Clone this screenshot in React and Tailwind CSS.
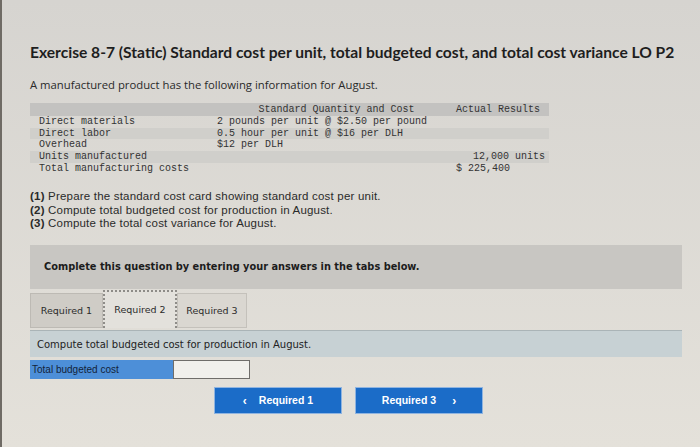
export default function App() {
  const rows = [
    { label: "Direct materials", std: "2 pounds per unit @ $2.50 per pound", actual: "", shade: false },
    { label: "Direct labor", std: "0.5 hour per unit @ $16 per DLH", actual: "", shade: true },
    { label: "Overhead", std: "$12 per DLH", actual: "", shade: false },
    { label: "Units manufactured", std: "", actual: "12,000 units", shade: true, right: true },
    { label: "Total manufacturing costs", std: "", actual: "$ 225,400", shade: false },
  ];

  return (
    <div className="w-[700px] h-[447px] overflow-hidden bg-gradient-to-b from-[#d6d4d0] to-[#e4e1da] border-l-[2px] border-[#6f6b65] text-[#222]">
      <div className="pl-[28px] pr-[18px]">
        <h1 className="pt-[42px] text-[15.6px] font-bold leading-[20px] text-[#1e1e1e]" style={{ fontFamily: "Lato, 'Open Sans', sans-serif" }}>
          Exercise 8-7 (Static) Standard cost per unit, total budgeted cost, and total cost variance LO P2
        </h1>

        <p className="mt-[16px] text-[11.3px] leading-[14px] text-[#2a2a2a]" style={{ fontFamily: "'Open Sans', sans-serif" }}>
          A manufactured product has the following information for August.
        </p>

        {/* data table */}
        <div className="mt-[11px] w-[519px] text-[10px] leading-[11.5px] text-[#333]" style={{ fontFamily: "'Liberation Mono', monospace" }}>
          <div className="flex h-[13px] items-center bg-[#c3c2c0]">
            <div className="w-[187px]"></div>
            <div className="w-[239px] text-center">Standard Quantity and Cost</div>
            <div className="flex-1">Actual Results</div>
          </div>
          {rows.map((r) => (
            <div key={r.label} className={`flex h-[11.7px] items-center ${r.shade ? "bg-[#d0cfcb]" : ""}`}>
              <div className="w-[187px] pl-[9px] whitespace-pre">{r.label}</div>
              <div className="w-[239px] whitespace-pre">{r.std}</div>
              <div className={`flex-1 whitespace-pre ${r.right ? "text-right pr-[4px]" : ""}`}>{r.actual}</div>
            </div>
          ))}
        </div>

        <div className="mt-[16px] text-[11.5px] leading-[13.25px] tracking-[0.2px] text-[#2a2a2a]" style={{ fontFamily: "'Liberation Sans', Arial, sans-serif" }}>
          <p><span className="font-bold">(1)</span> Prepare the standard cost card showing standard cost per unit.</p>
          <p><span className="font-bold">(2)</span> Compute total budgeted cost for production in August.</p>
          <p><span className="font-bold">(3)</span> Compute the total cost variance for August.</p>
        </div>

        <div className="mt-[15px] h-[44px] flex items-center bg-[#c8c6c2] pl-[14px] text-[9.8px] font-bold text-[#1c1c1c]" style={{ fontFamily: "'DejaVu Sans', Verdana, sans-serif" }}>
          Complete this question by entering your answers in the tabs below.
        </div>

        {/* tabs */}
        <div className="flex items-end h-[39px] text-[9.5px] text-[#2b2b2b]" style={{ fontFamily: "'DejaVu Sans', Verdana, sans-serif" }}>
          <div className="w-[73px] h-[35px] flex items-center justify-center bg-[#cfccc6] border border-[#bdbab4]">Required 1</div>
          <div className="w-[74px] h-[38px] flex items-center justify-center bg-[#e3e1dc] border-x-2 border-t-2 border-dotted border-[#8e8c88]">Required 2</div>
          <div className="w-[70px] h-[35px] flex items-center justify-center bg-[#dad7d1] border border-[#c4c1bb]">Required 3</div>
        </div>

        <div className="mt-[2px] h-[27px] flex items-center bg-[#c7d1d4] border-t border-[#aab4b7] pl-[7px] text-[10px] text-[#222]" style={{ fontFamily: "'DejaVu Sans', Verdana, sans-serif" }}>
          Compute total budgeted cost for production in August.
        </div>

        <div className="mt-[3px] flex h-[19px]">
          <div className="w-[143px] flex items-center bg-[#4d8fd8] pl-[2px] text-[10px] text-[#13233a]" style={{ fontFamily: "'Liberation Sans', Arial, sans-serif" }}>
            Total budgeted cost
          </div>
          <div className="w-[77px] bg-[#f1f0ec] border border-[#6f6d6a]"></div>
        </div>

        <div className="mt-[9px] flex pl-[185px] gap-[15px] text-[10.5px] font-bold text-white" style={{ fontFamily: "'Liberation Sans', Arial, sans-serif" }}>
          <button className="w-[126px] h-[25px] flex items-center justify-center gap-[12px] bg-[#1b6cc8] shadow-[0_0_0_1px_#8fb4e0]">
            <span className="text-[12px]">&lsaquo;</span>
            <span>Required 1</span>
          </button>
          <button className="w-[126px] h-[25px] flex items-center justify-center gap-[16px] bg-[#1b6cc8] shadow-[0_0_0_1px_#8fb4e0]">
            <span>Required 3</span>
            <span className="text-[12px]">&rsaquo;</span>
          </button>
        </div>
      </div>
    </div>
  );
}
